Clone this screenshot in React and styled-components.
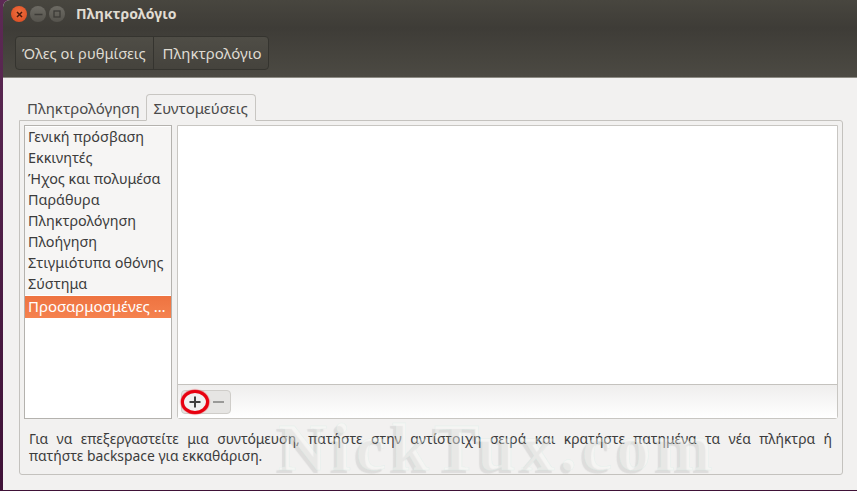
import React from "react";
import styled, { createGlobalStyle } from "styled-components";

const Global = createGlobalStyle`
  html, body { margin: 0; padding: 0; width: 857px; height: 491px; overflow: hidden; background: #2c0f26; }
  * { box-sizing: border-box; }
`;
const Desktop = styled.div`
  width: 857px; height: 491px; padding: 0 0 1px 3px;
  background: linear-gradient(180deg, #5d2a55 0%, #3f1237 100%);
  font-family: "Noto Sans", "DejaVu Sans", sans-serif; font-size: 14px; color: #3c3c3c;
`;
const Win = styled.div`
  height: 490px; display: flex; flex-direction: column; position: relative;
  border-top-left-radius: 7px; overflow: hidden; background: #f2f1f0;
`;
const TitleBar = styled.div`
  height: 28px; flex: none; display: flex; align-items: center; padding: 0 0 0 8px;
  background: linear-gradient(180deg, #48463f 0%, #3e3c37 100%);
`;
const WinBtns = styled.div`display: flex; gap: 3px; margin-right: 11px;`;
const WinBtn = styled.div`
  width: 16px; height: 16px; border-radius: 50%; display: flex; align-items: center; justify-content: center;
  background: ${p => p.$close ? "radial-gradient(circle at 50% 40%, #f0703f, #d9481f)" : "linear-gradient(180deg, #6d6b64, #55534d)"};
  svg { display: block; }
`;
const Title = styled.div`
  font-weight: 700; font-size: 14px; color: #e0dcd2; letter-spacing: 0.1px; position: relative; top: -1px;
`;
const ToolBar = styled.div`
  height: 50px; flex: none; display: flex; align-items: flex-start; padding: 8px 0 0 12px;
  background: linear-gradient(180deg, #3e3c37 0%, #4c4a43 100%);
  border-bottom: 1px solid #8d8b84;
`;
const Crumbs = styled.div`
  display: flex; height: 34px; border: 1px solid #35342f; border-radius: 4px;
  background: linear-gradient(180deg, #4f4d46, #45433d);
`;
const Crumb = styled.div`
  padding: 0 7px 0 6px; line-height: 32px; color: #dfdbd2; font-size: 14.7px; white-space: nowrap;
  & + & { border-left: 1px solid #35342f; padding: 0 7px 0 9px; font-size: 15px; }
`;
const Content = styled.div`flex: 1; display: flex; flex-direction: column; padding: 16px 14px 15px 16px; min-height: 0;`;
const Tabs = styled.div`display: flex; height: 27px; flex: none; position: relative; z-index: 1; margin-bottom: -1px;`;
const Tab = styled.div`
  padding: ${p => p.$active ? "1px 7px 0" : "2px 6px 0 8px"}; height: 27px; font-size: 15px; white-space: nowrap; line-height: 25px;
  color: #4a4a4a;
  ${p => p.$active ? `
    background: #f2f1f0; border: 1px solid #c8c6c2; border-bottom: 1px solid #f2f1f0; border-radius: 4px 4px 0 0;
  ` : ""}
`;
const Notebook = styled.div`
  flex: 1; min-height: 0; border: 1px solid #c4c2be; border-radius: 0 3px 3px 3px; padding: 4px 4px 0 4px; display: flex; flex-direction: column;
`;
const Panes = styled.div`display: flex; gap: 5px; height: 294px; flex: none;`;
const List = styled.div`
  width: 148px; flex: none; background: #fff; border: 1px solid #b4b2ae; display: flex; flex-direction: column; padding-top: 1px;
`;
const ListItem = styled.div`
  height: 21px; line-height: 20px; padding: 0 3px; font-size: 14.4px; white-space: nowrap; overflow: hidden; color: #3c3c3c;
  ${p => p.$sel ? `
    margin-top: 1px; height: 22px; font-size: 15px; color: #fff; background: linear-gradient(180deg, #ee7340, #f5824f);
    overflow: hidden; text-overflow: ellipsis;
  ` : "background: #f6f5f4;"}
`;
const ListRest = styled.div`flex: 1;`;
const Right = styled.div`
  flex: 1; border: 1px solid #c8c6c2; border-radius: 0 0 3px 3px; display: flex; flex-direction: column; min-width: 0;
`;
const Tree = styled.div`height: 259px; background: #fff; border-bottom: 1px solid #c4c2be; flex: none;`;
const Strip = styled.div`
  flex: 1; display: flex; align-items: center; padding-left: 3px;
  background: linear-gradient(180deg, #efeeed, #fff);
`;
const Btns = styled.div`
  display: flex; width: 50px; height: 24px; border: 1px solid #cfcdc9; border-radius: 4px; background: #e6e5e3; position: relative;
`;
const Btn = styled.div`
  width: 24px; display: flex; align-items: center; justify-content: center;
`;
const Ring = styled.div`
  position: absolute; left: -1px; top: -1px; width: 28px; height: 24px; border: 3px solid #e8000f; border-radius: 50%;
  box-shadow: 0 0 1px 0.5px rgba(232, 0, 15, 0.7);
  background: #f1f1f1; display: flex; align-items: center; justify-content: center;
`;
const Help = styled.div`
  padding: 11px 6px 0 5px; font-size: 13.9px; line-height: 17px; color: #3c3c3c; text-align: justify; text-align-last: left;
`;
const HelpFirst = styled.div`
  text-align-last: justify; white-space: nowrap;
`;
const Watermark = styled.div`
  position: absolute; left: 275px; top: 412px; font-family: "Liberation Serif", serif; font-weight: 700; font-size: 68px; line-height: 70px; letter-spacing: 5px;
  color: rgba(252, 252, 250, 0.35); -webkit-text-stroke: 0.5px rgba(200, 235, 225, 0.3);
  text-shadow: -3px 3px 1px rgba(150,150,150,0.22); white-space: nowrap; pointer-events: none;
`;

const items = ["Γενική πρόσβαση", "Εκκινητές", "Ήχος και πολυμέσα", "Παράθυρα", "Πληκτρολόγηση", "Πλοήγηση", "Στιγμιότυπα οθόνης", "Σύστημα"];

export default function App() {
  return (
    <Desktop>
      <Global />
      <Win>
        <TitleBar>
          <WinBtns>
            <WinBtn $close><svg width="7" height="7" viewBox="0 0 7 7"><path d="M1 1l5 5M6 1l-5 5" stroke="#4a1a0c" strokeWidth="1.5" /></svg></WinBtn>
            <WinBtn><svg width="9" height="3" viewBox="0 0 9 3"><path d="M0.5 1.5h8" stroke="#3c3b37" strokeWidth="1.4" /></svg></WinBtn>
            <WinBtn><svg width="8" height="8" viewBox="0 0 8 8"><rect x="1" y="1" width="6" height="6" fill="none" stroke="#3c3b37" strokeWidth="1.3" /></svg></WinBtn>
          </WinBtns>
          <Title>Πληκτρολόγιο</Title>
        </TitleBar>
        <ToolBar>
          <Crumbs>
            <Crumb>Όλες οι ρυθμίσεις</Crumb>
            <Crumb>Πληκτρολόγιο</Crumb>
          </Crumbs>
        </ToolBar>
        <Content>
          <Tabs>
            <Tab>Πληκτρολόγηση</Tab>
            <Tab $active>Συντομεύσεις</Tab>
          </Tabs>
          <Notebook>
            <Panes>
              <List>
                {items.map(t => <ListItem key={t}>{t}</ListItem>)}
                <ListItem $sel>Προσαρμοσμένες …</ListItem>
                <ListRest />
              </List>
              <Right>
                <Tree />
                <Strip>
                  <Btns>
                    <Ring><svg width="12" height="12" viewBox="0 0 12 12"><path d="M6 0.5v11M0.5 6h11" stroke="#3f3f3f" strokeWidth="2" /></svg></Ring>
                    <Btn />
                    <Btn><svg width="11" height="2" viewBox="0 0 11 2"><path d="M0 1h11" stroke="#9a9a98" strokeWidth="2" /></svg></Btn>
                  </Btns>
                </Strip>
              </Right>
            </Panes>
            <Help>
              <HelpFirst>Για να επεξεργαστείτε μια συντόμευση, πατήστε στην αντίστοιχη σειρά και κρατήστε πατημένα τα νέα πλήκτρα ή</HelpFirst>
              πατήστε backspace για εκκαθάριση.
            </Help>
          </Notebook>
        </Content>
        <Watermark>NickTux.com</Watermark>
      </Win>
    </Desktop>
  );
}
